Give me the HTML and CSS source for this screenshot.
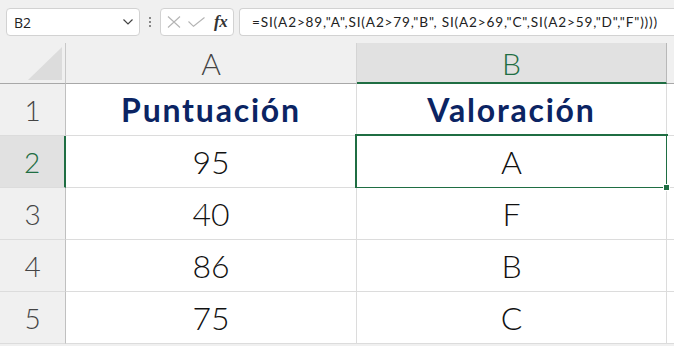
FILE: index.html
```html
<!DOCTYPE html>
<html lang="es">
<head>
<meta charset="utf-8">
<title>Excel SI</title>
<link rel="stylesheet" href="styles.css">
</head>
<body>
<div class="toolbar">
  <div class="namebox">
    <span class="namebox-text">B2</span>
    <svg class="chev" width="10" height="6" viewBox="0 0 10 6"><path d="M0.5 0.5 L5 5 L9.5 0.5" fill="none" stroke="#444" stroke-width="1.2"/></svg>
  </div>
  <div class="dots"><span></span><span></span><span></span></div>
  <div class="fxbox">
    <svg width="14" height="12" viewBox="0 0 14 12"><path d="M1 0.5 L13 11.5 M13 0.5 L1 11.5" stroke="#b4b4b4" stroke-width="1.1" fill="none"/></svg>
    <svg width="17" height="10" viewBox="0 0 17 10"><path d="M0.5 4.5 L5.5 9.3 L16.5 0.5" stroke="#b4b4b4" stroke-width="1.1" fill="none"/></svg>
    <span class="fx">fx</span>
  </div>
  <div class="formula">=SI(A2&gt;89,"A",SI(A2&gt;79,"B", SI(A2&gt;69,"C",SI(A2&gt;59,"D","F"))))</div>
</div>
<div class="sheet">
  <div class="hrow">
    <div class="corner"><div class="tri"></div></div>
    <div class="colhead colA">A</div>
    <div class="colhead colB sel">B</div>
    <div class="colhead colC"></div>
  </div>
  <div class="row">
    <div class="rh">1</div>
    <div class="cell head">Puntuación</div>
    <div class="cell head">Valoración</div>
    <div class="cell rest"></div>
  </div>
  <div class="row">
    <div class="rh rsel">2</div>
    <div class="cell">95</div>
    <div class="cell active">A<span class="handle"></span></div>
    <div class="cell rest"></div>
  </div>
  <div class="row">
    <div class="rh">3</div>
    <div class="cell">40</div>
    <div class="cell">F</div>
    <div class="cell rest"></div>
  </div>
  <div class="row">
    <div class="rh">4</div>
    <div class="cell">86</div>
    <div class="cell">B</div>
    <div class="cell rest"></div>
  </div>
  <div class="row">
    <div class="rh">5</div>
    <div class="cell">75</div>
    <div class="cell">C</div>
    <div class="cell rest"></div>
  </div>
</div>
</body>
</html>
```
FILE: styles.css
```css
html, body {
  margin: 0;
  padding: 0;
}
body {
  width: 674px;
  height: 346px;
  overflow: hidden;
  background: #f0f0f0;
  font-family: Lato, "DejaVu Sans", sans-serif;
}
.toolbar {
  display: flex;
  align-items: center;
  height: 28px;
  padding-top: 8px;
  padding-left: 6px;
}
.namebox {
  box-sizing: border-box;
  width: 134px;
  height: 28px;
  background: #fff;
  border: 1px solid #d2d2d2;
  border-radius: 4px;
  display: flex;
  align-items: center;
  padding-left: 7px;
  padding-right: 6px;
}
.namebox-text {
  flex: 1;
  font-family: "Open Sans", "Noto Sans", sans-serif;
  font-size: 14px;
  color: #222;
}
.chev {
  display: block;
}
.dots {
  width: 20px;
  display: flex;
  flex-direction: column;
  align-items: center;
  gap: 2px;
}
.dots span {
  width: 2px;
  height: 2px;
  background: #888;
}
.fxbox {
  box-sizing: border-box;
  width: 74px;
  height: 28px;
  background: #fff;
  border: 1px solid #d2d2d2;
  border-radius: 4px;
  display: flex;
  align-items: center;
  padding-left: 6px;
  gap: 7px;
}
.fx {
  font-family: "Liberation Serif", "DejaVu Serif", serif;
  font-style: italic;
  font-size: 17px;
  font-weight: bold;
  color: #333;
  margin-left: 2px;
  letter-spacing: -0.5px;
}
.formula {
  box-sizing: border-box;
  flex: 1;
  height: 28px;
  margin-left: 5px;
  background: #fff;
  border: 1px solid #d2d2d2;
  border-right: none;
  border-radius: 4px 0 0 4px;
  display: flex;
  align-items: center;
  padding-left: 12px;
  font-size: 13.6px;
  letter-spacing: 0.85px;
  color: #222;
  white-space: nowrap;
  overflow: hidden;
}
.sheet {
  margin-top: 7px;
}
.hrow {
  display: flex;
  height: 41px;
}
.corner {
  box-sizing: border-box;
  width: 66px;
  border-right: 1px solid #c8c8c8;
  border-bottom: 1px solid #a8a8a8;
  display: flex;
  justify-content: flex-end;
  align-items: flex-end;
  padding: 0 3px 3px 0;
}
.tri {
  width: 34px;
  height: 33px;
  background: #dcdcdc;
  clip-path: polygon(100% 0, 100% 100%, 0 100%);
}
.colhead {
  box-sizing: border-box;
  display: flex;
  align-items: center;
  justify-content: center;
  font-size: 30px;
  font-weight: 300;
  color: #444;
  border-bottom: 1px solid #a8a8a8;
  border-right: 1px solid #d4d4d4;
}
.colA { width: 291px; }
.colB { width: 310px; border-right-color: #b8b8b8; }
.colC { flex: 1; border-right: none; }
.colhead.sel {
  background: #e1e1e1;
  color: #1f6e43;
  border-bottom: 2px solid #1f6e43;
}
.row {
  display: flex;
  height: 52px;
}
.rh {
  box-sizing: border-box;
  width: 66px;
  border-right: 1px solid #c0c0c0;
  border-bottom: 1px solid #dcdcdc;
  display: flex;
  align-items: center;
  justify-content: center;
  font-size: 28px;
  font-weight: 300;
  color: #444;
}
.rh.rsel {
  background: #e1e1e1;
  color: #1f6e43;
  border-right: 2px solid #1f6e43;
}
.cell {
  box-sizing: border-box;
  background: #fff;
  border-right: 1px solid #dcdcdc;
  border-bottom: 1px solid #dcdcdc;
  display: flex;
  align-items: center;
  justify-content: center;
  font-size: 32px;
  font-weight: 300;
  color: #111;
  width: 291px;
  position: relative;
}
.cell:nth-child(3) {
  width: 310px;
}
.cell.rest {
  flex: 1;
  width: auto;
  border-right: none;
}
.cell.head {
  font-weight: bold;
  color: #0b2463;
  letter-spacing: 1.8px;
}
.cell.active::after {
  content: "";
  position: absolute;
  left: -2px;
  top: -2px;
  right: -2px;
  bottom: -2px;
  border: 2px solid #1f6e43;
}
.handle {
  position: absolute;
  right: -4px;
  bottom: -4px;
  width: 5px;
  height: 5px;
  background: #1f6e43;
  border: 1px solid #fff;
  z-index: 2;
}
```
